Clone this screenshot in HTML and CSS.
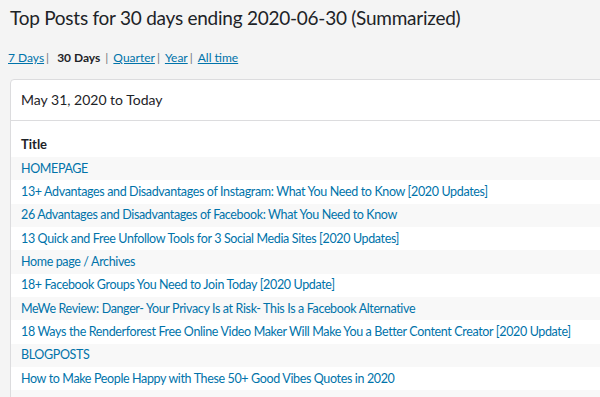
FILE: index.html
```html
<!DOCTYPE html>
<html>
<head>
<meta charset="utf-8">
<link rel="stylesheet" href="styles.css">
</head>
<body>
<div class="wrap">
  <h1 class="page-title">Top Posts for 30 days ending 2020-06-30 (Summarized)</h1>
  <nav class="periods"><a href="#">7 Days</a><span class="sep">|</span><strong>30 Days</strong><span class="sep">|</span><a href="#">Quarter</a><span class="sep">|</span><a href="#">Year</a><span class="sep">|</span><a href="#">All time</a></nav>
  <div class="box">
    <div class="box-head">May 31, 2020 to Today</div>
    <table class="posts">
      <thead><tr><th>Title</th></tr></thead>
      <tbody>
        <tr><td><a href="#">HOMEPAGE</a></td></tr>
        <tr><td><a href="#">13+ Advantages and Disadvantages of Instagram: What You Need to Know [2020 Updates]</a></td></tr>
        <tr><td><a href="#">26 Advantages and Disadvantages of Facebook: What You Need to Know</a></td></tr>
        <tr><td><a href="#">13 Quick and Free Unfollow Tools for 3 Social Media Sites [2020 Updates]</a></td></tr>
        <tr><td><a href="#">Home page / Archives</a></td></tr>
        <tr><td><a href="#">18+ Facebook Groups You Need to Join Today [2020 Update]</a></td></tr>
        <tr><td><a href="#">MeWe Review: Danger- Your Privacy Is at Risk- This Is a Facebook Alternative</a></td></tr>
        <tr><td><a href="#">18 Ways the Renderforest Free Online Video Maker Will Make You a Better Content Creator [2020 Update]</a></td></tr>
        <tr><td><a href="#">BLOGPOSTS</a></td></tr>
        <tr><td><a href="#">How to Make People Happy with These 50+ Good Vibes Quotes in 2020</a></td></tr>
        <tr><td><a href="#">&nbsp;</a></td></tr>
      </tbody>
    </table>
  </div>
</div>
</body>
</html>
```
FILE: styles.css
```css
html, body {
  margin: 0;
  padding: 0;
  background: #f4f4f4;
  font-family: "Lato", "Open Sans", sans-serif;
  color: #1d2327;
  overflow: hidden;
}
.wrap {
  padding: 0 0 0 10px;
  width: 640px;
}
.page-title {
  margin: 0;
  padding-top: 5px;
  font-size: 19px;
  font-weight: 400;
  line-height: 26px;
  letter-spacing: -0.25px;
}
.periods {
  margin-top: 18px;
  font-size: 12px;
  line-height: 18px;
  margin-left: -2px;
}
.periods a {
  color: #0073aa;
  text-decoration: underline;
}
.periods strong {
  font-weight: 700;
  color: #1d2327;
  margin: 0 3px 0 3px;
}
.sep {
  color: #72777c;
  margin: 0 5px 0 2px;
}
.box {
  margin-top: 12px;
  background: #fff;
  border: 1px solid #dcdcde;
  border-radius: 4px;
}
.box-head {
  height: 40px;
  line-height: 40px;
  padding-left: 10px;
  font-size: 14px;
  border-bottom: 1px solid #dcdcde;
}
.posts {
  width: 100%;
  border-collapse: collapse;
  margin-top: 10px;
}
.posts th {
  text-align: left;
  font-weight: 700;
  font-size: 13px;
  height: 26px;
  padding: 0 10px;
  vertical-align: middle;
}
.posts td {
  height: 23.34px;
  padding: 0 10px;
  font-size: 12.5px;
  letter-spacing: -0.36px;
  line-height: 16px;
  white-space: nowrap;
  vertical-align: middle;
}
.posts tbody tr:nth-child(odd) {
  background: #f8f8f8;
}
.posts a {
  color: #0073aa;
  text-decoration: none;
}
```
